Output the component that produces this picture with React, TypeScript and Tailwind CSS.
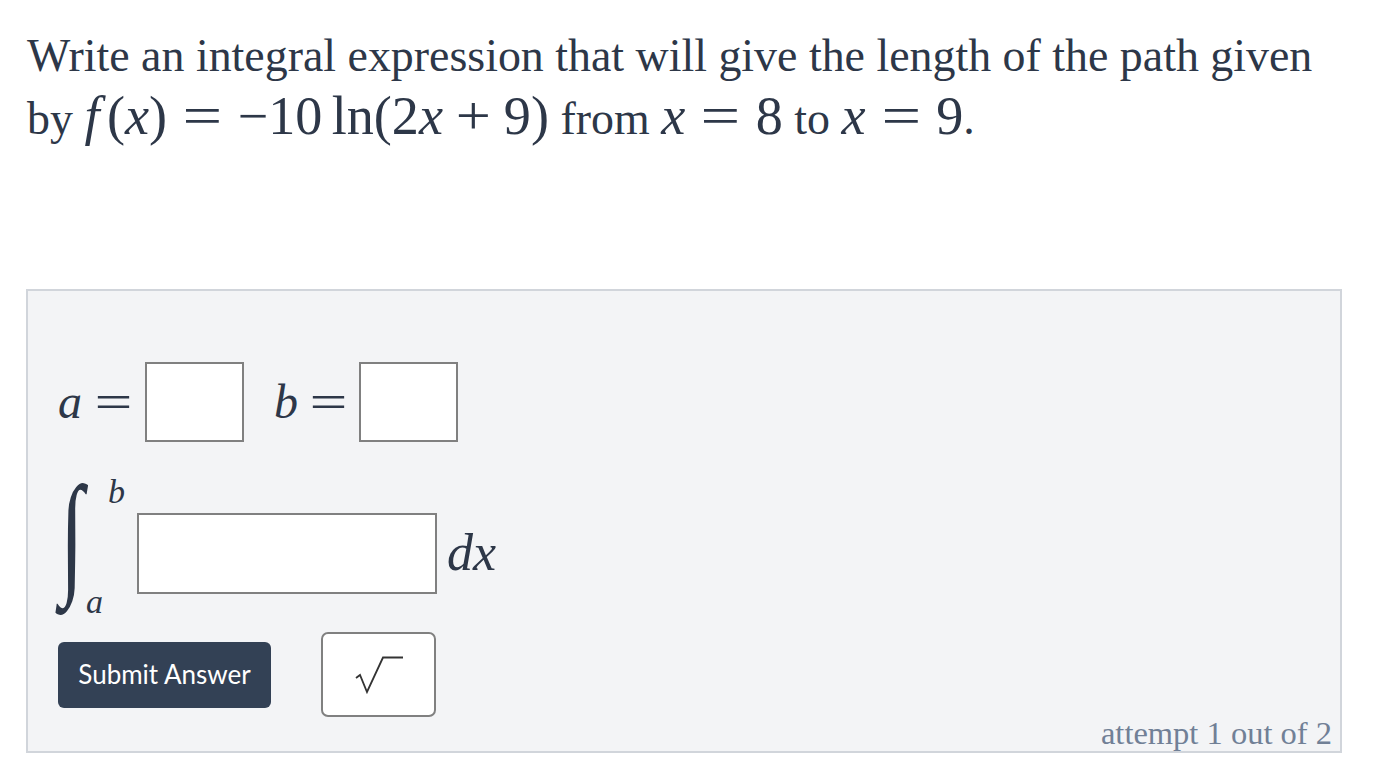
import React from "react";

const serif = { fontFamily: '"Liberation Serif", "DejaVu Serif", serif' };

function M({ children, className = "" }: { children: React.ReactNode; className?: string }) {
  return (
    <span className={"text-[1.18em] " + className} style={serif}>
      {children}
    </span>
  );
}

function I({ children }: { children: React.ReactNode }) {
  return <span className="italic">{children}</span>;
}

function Rel({ children }: { children: React.ReactNode }) {
  return <span className="mx-[0.37em] inline-block scale-x-[1.3]">{children}</span>;
}

function Bin({ children }: { children: React.ReactNode }) {
  return <span className="mx-[0.28em] inline-block scale-x-[1.15]">{children}</span>;
}

export default function App() {
  return (
    <div className="min-h-screen w-full bg-white text-[#2d3748]" style={serif}>
      <div className="pl-[27px] pr-[34px] pt-[26px]">
        <p className="text-[45.9px] leading-[60px]">
          Write an integral expression that will give the length of the path given
          <br />
          by{" "}
          <M>
            <I>f</I>
            <span className="ml-[0.14em]">(</span>
            <I>x</I>)<Rel>=</Rel>−10<span className="ml-[0.17em]">ln</span>(2<I>x</I>
            <Bin>+</Bin>9)
          </M>{" "}
          from{" "}
          <M>
            <I>x</I>
            <Rel>=</Rel>8
          </M>{" "}
          to{" "}
          <M>
            <I>x</I>
            <Rel>=</Rel>9
          </M>
          .
        </p>

        <div className="mt-[140px] flex h-[464px] w-[1316px] -ml-px flex-col border-2 border-[#d1d5db] bg-[#f3f4f6] pl-[30px] pr-[8px]">
          {/* row a b */}
          <div className="mt-[71px] flex h-[80px] items-center text-[48px]" style={serif}>
            <span className="italic">a</span>
            <span className="ml-[18px] mr-[18px] inline-block scale-x-[1.4]">=</span>
            <div className="h-[80px] w-[99px] border-2 border-[#808080] bg-white" />
            <span className="ml-[30px] italic">b</span>
            <span className="ml-[17px] mr-[17px] inline-block scale-x-[1.4]">=</span>
            <div className="h-[80px] w-[99px] border-2 border-[#808080] bg-white" />
          </div>

          {/* integral row */}
          <div className="mt-[47px] flex h-[128px] items-center">
            <div className="relative h-[128px] w-[79px]" style={serif}>
              <span className="absolute left-[2px] top-[-22px] inline-block origin-top-left scale-x-[0.72] scale-y-[1.12] text-[120px] italic leading-none">
                ∫
              </span>
              <span className="absolute left-[50px] top-[-14px] text-[34px] italic leading-none">b</span>
              <span className="absolute left-[28px] top-[96px] text-[34px] italic leading-none">a</span>
            </div>
            <div className="h-[81px] w-[300px] border-2 border-[#808080] bg-white" />
            <span className="ml-[10px] text-[52px] italic" style={serif}>
              dx
            </span>
          </div>

          {/* buttons */}
          <div className="mt-[15px] flex items-center">
            <button
              className="flex h-[66px] w-[213px] items-center justify-center rounded-[6px] bg-[#334155] text-[26px] font-normal text-white"
              style={{ fontFamily: 'Lato, "Open Sans", sans-serif' }}
            >
              Submit Answer
            </button>
            <button className="ml-[50px] flex h-[85px] w-[115px] items-center justify-center rounded-[7px] border-2 border-[#808080] bg-white">
              <svg width="50" height="38" viewBox="0 0 50 38" fill="none" className="ml-[3px]">
                <path
                  d="M1 22 L5 19 L12 36 L28 1.5 L48 1.5"
                  stroke="#333"
                  strokeWidth="1.8"
                  strokeLinejoin="miter"
                  fill="none"
                />
              </svg>
            </button>
          </div>

          <div className="mt-auto mb-[6px] text-right text-[32.5px] leading-none text-[#718096]" style={serif}>
            attempt 1 out of 2
          </div>
        </div>
      </div>
    </div>
  );
}
